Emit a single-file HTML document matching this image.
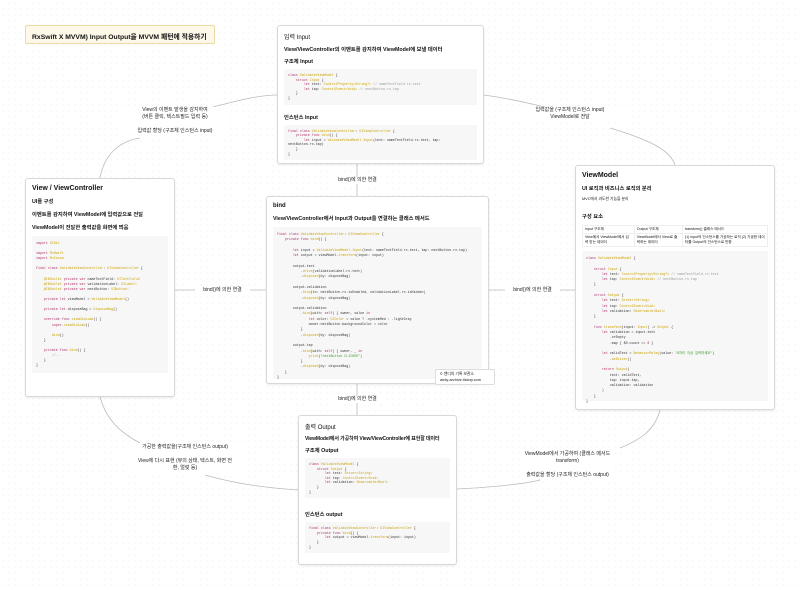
<!DOCTYPE html>
<html><head><meta charset="utf-8">
<style>
*{margin:0;padding:0;box-sizing:border-box}
body{width:800px;height:590px;background:#fff;position:relative;overflow:hidden;font-family:"Liberation Sans","Noto Sans CJK KR",sans-serif;color:#111;background-image:radial-gradient(#e9e9e9 0.5px,transparent 0.6px);background-size:6px 6px}
.card{position:absolute;background:#fff;border:1px solid #d8d8d8;border-radius:3px;box-shadow:0 1px 2px rgba(0,0,0,.08);padding:6px}
.h{font-weight:bold;font-size:7px;margin-bottom:5px}
.h2{font-size:5.3px;font-weight:bold;margin-bottom:5px;white-space:nowrap}
pre{font-family:"Liberation Mono",monospace;font-size:3.3px;line-height:5.2px;background:#f7f7f7;padding:5px 4px;color:#333;white-space:pre}
.k{color:#b0306a}.t{color:#c9a100}.g{color:#999}.s{color:#3c9a2c}
.lbl{position:absolute;font-size:5px;text-align:center;background:#fff;line-height:7px;color:#222}
svg{position:absolute;left:0;top:0}
.sm .h2{margin-bottom:4px}
.sm pre{line-height:4.6px;padding:4px}
</style></head><body>
<svg width="800" height="590" fill="none" stroke="#bbb" stroke-width="0.8">
<path d="M100 178 C105 150 125 140 140 138"/>
<path d="M213 107 C240 100 260 95 277 95"/>
<path d="M484 95 C520 100 560 110 580 118"/>
<path d="M610 128 C650 140 670 150 675 165"/>
<path d="M357 164 V196"/><path d="M357 384 V415"/>
<path d="M175 290 H266"/><path d="M489 290 H575"/>
<path d="M660 410 C655 430 640 440 620 448"/>
<path d="M540 480 C520 485 480 488 457 489"/>
<path d="M100 397 C105 415 115 430 140 443"/>
<path d="M205 475 C240 485 270 488 298 490"/>
</svg>
<div style="position:absolute;left:25px;top:25px;width:190px;height:19px;background:#fdf8e8;border:1px solid #ecd9a3;border-radius:2px;font-size:6.8px;font-weight:bold;padding:5px 6px;white-space:nowrap">RxSwift X MVVM) Input Output을 MVVM 패턴에 적용하기</div>

<div class="lbl" style="left:120px;top:107px;width:110px">View의 이벤트 발생을 감지하여<br>(버튼 클릭, 텍스트필드 입력 등)<br><br>입력값 할당 (구조체 인스턴스 input)</div>
<div class="lbl" style="left:510px;top:107px;width:120px">입력값을 (구조체 인스턴스 input)<br>ViewModel로 전달</div>
<div class="lbl" style="left:330px;top:177px;width:55px">bind()에 의한 연결</div>
<div class="lbl" style="left:330px;top:396px;width:55px">bind()에 의한 연결</div>
<div class="lbl" style="left:195px;top:287px;width:55px">bind()에 의한 연결</div>
<div class="lbl" style="left:505px;top:287px;width:55px">bind()에 의한 연결</div>
<div class="lbl" style="left:125px;top:444px;width:120px">가공한 출력값을(구조체 인스턴스 output)<br><br>View에 다시 표현 (뷰의 상태, 텍스트, 화면 전<br>환, 얼럿 등)</div>
<div class="lbl" style="left:520px;top:451px;width:95px">ViewModel에서 가공하여 (클래스 메서드<br>transform)<br><br>출력값을 할당 (구조체 인스턴스 output)</div>

<div class="card sm" style="left:277px;top:25px;width:207px;height:139px">
<div class="h2" style="font-weight:normal;font-size:6px">입력 Input</div>
<div class="h2">View/ViewController의 이벤트를 감지하여 ViewModel에 보낼 데이터</div>
<div class="h2">구조체 Input</div>
<pre><span class="k">class</span> <span class="t">ValidateViewModel</span> {
    <span class="k">struct</span> <span class="t">Input</span> {
        <span class="k">let</span> text: <span class="t">ControlProperty&lt;String?&gt;</span> <span class="g">// nameTextField.rx.text</span>
        <span class="k">let</span> tap: <span class="t">ControlEvent&lt;Void&gt;</span> <span class="g">// nextButton.rx.tap</span>
    }
}</pre>
<div class="h2" style="margin-top:8px">인스턴스 Input</div>
<pre><span class="k">final class</span> <span class="t">ValidateViewController</span>: <span class="t">UIViewController</span> {
    <span class="k">private func</span> <span class="t">bind</span>() {
        <span class="k">let</span> input = <span class="t">ValidateViewModel.Input</span>(text: nameTextField.rx.text, tap:
nextButton.rx.tap)
    }
}</pre>
</div>

<div class="card" style="left:25px;top:178px;width:150px;height:219px">
<div class="h">View / ViewController</div>
<div class="h2">UI를 구성</div>
<div class="h2">이벤트를 감지하여 ViewModel에 입력값으로 전달</div>
<div class="h2">ViewModel이 전달한 출력값을 화면에 띄움</div>
<pre style="line-height:5.1px"><span class="k">import</span> <span class="t">UIKit</span>

<span class="k">import</span> <span class="t">RxSwift</span>
<span class="k">import</span> <span class="t">RxCocoa</span>

<span class="k">final class</span> <span class="t">ValidateViewController</span>: <span class="t">UIViewController</span> {

    <span class="t">@IBOutlet</span> <span class="k">private var</span> nameTextField: <span class="t">UITextField!</span>
    <span class="t">@IBOutlet</span> <span class="k">private var</span> validationLabel: <span class="t">UILabel!</span>
    <span class="t">@IBOutlet</span> <span class="k">private var</span> nextButton: <span class="t">UIButton!</span>

    <span class="k">private let</span> viewModel = <span class="t">ValidateViewModel</span>()

    <span class="k">private let</span> disposeBag = <span class="t">DisposeBag</span>()

    <span class="k">override func</span> <span class="t">viewDidLoad</span>() {
        <span class="k">super</span>.<span class="t">viewDidLoad</span>()

        <span class="t">bind</span>()
    }

    <span class="k">private func</span> <span class="t">bind</span>() {
        <span class="g">//...</span>
    }
}</pre>
</div>

<div class="card" style="left:266px;top:196px;width:223px;height:188px">
<div class="h2" style="font-size:6px">bind</div>
<div class="h2">View/ViewController에서 Input과 Output을 연결하는 클래스 메서드</div>
<pre style="line-height:5.3px;height:152px"><span class="k">final class</span> <span class="t">ValidateViewController</span>: <span class="t">UIViewController</span> {
    <span class="k">private func</span> <span class="t">bind</span>() {

        <span class="k">let</span> input = <span class="t">ValidateViewModel.Input</span>(text: nameTextField.rx.text, tap: nextButton.rx.tap)
        <span class="k">let</span> output = viewModel.<span class="t">transform</span>(input: input)

        output.text
            .<span class="t">drive</span>(validationLabel.rx.text)
            .<span class="t">disposed</span>(by: disposeBag)

        output.validation
            .<span class="t">bind</span>(to: nextButton.rx.isEnabled, validationLabel.rx.isHidden)
            .<span class="t">disposed</span>(by: disposeBag)

        output.validation
            .<span class="t">bind</span>(with: <span class="k">self</span>) { owner, value <span class="k">in</span>
                <span class="k">let</span> color: <span class="t">UIColor</span> = value ? .systemRed : .lightGray
                owner.nextButton.backgroundColor = color
            }
            .<span class="t">disposed</span>(by: disposeBag)

        output.tap
            .<span class="t">bind</span>(with: <span class="k">self</span>) { owner, _ <span class="k">in</span>
                <span class="t">print</span>(<span class="s">"nextButton CLICKED"</span>)
            }
            .<span class="t">disposed</span>(by: disposeBag)
    }
}</pre>
<div style="position:absolute;left:168px;top:172px;width:60px;height:16px;background:#fff;border:1px solid #ddd;border-radius:2px;font-size:3.8px;padding:2px 4px;line-height:5.5px">© 앤디의 기록 보관소<br>andy-archive.tistory.com</div>
</div>

<div class="card" style="left:575px;top:165px;width:200px;height:245px">
<div class="h">ViewModel</div>
<div class="h2">UI 로직과 비즈니스 로직의 분리</div>
<div style="font-size:3.8px;margin-bottom:10px">MVC에서 과도한 기능을 분리</div>
<div class="h2">구성 요소</div>
<table style="border-collapse:collapse;font-size:3.6px;width:100%;margin-bottom:4px">
<tr><td style="border:1px solid #eee;padding:1px 2px;width:28%">Input 구조체</td><td style="border:1px solid #eee;padding:1px 2px;width:26%">Output 구조체</td><td style="border:1px solid #eee;padding:1px 2px">transform() 클래스 메서드</td></tr>
<tr><td style="border:1px solid #eee;padding:1px 2px">View에서 ViewModel에서 입력 받는 데이터</td><td style="border:1px solid #eee;padding:1px 2px">ViewModel에서 View로 출력하는 데이터</td><td style="border:1px solid #eee;padding:1px 2px">(1) input의 인스턴스를 가공하는 로직 (2) 가공한 데이터를 Output의 인스턴스로 반환</td></tr>
</table>
<pre style="line-height:5.3px;height:150px"><span class="k">class</span> <span class="t">ValidateViewModel</span> {

    <span class="k">struct</span> <span class="t">Input</span> {
        <span class="k">let</span> text: <span class="t">ControlProperty&lt;String?&gt;</span> <span class="g">// nameTextField.rx.text</span>
        <span class="k">let</span> tap: <span class="t">ControlEvent&lt;Void&gt;</span> <span class="g">// nextButton.rx.tap</span>
    }

    <span class="k">struct</span> <span class="t">Output</span> {
        <span class="k">let</span> text: <span class="t">Driver&lt;String&gt;</span>
        <span class="k">let</span> tap: <span class="t">ControlEvent&lt;Void&gt;</span>
        <span class="k">let</span> validation: <span class="t">Observable&lt;Bool&gt;</span>
    }

    <span class="k">func</span> <span class="t">transform</span>(input: <span class="t">Input</span>) -&gt; <span class="t">Output</span> {
        <span class="k">let</span> validation = input.text
            .orEmpty
            .map { $0.count &gt;= <span class="k">8</span> }

        <span class="k">let</span> validText = <span class="t">BehaviorRelay</span>(value: <span class="s">"8자리 이상 입력하세요"</span>)
            .<span class="t">asDriver</span>()

        <span class="k">return</span> <span class="t">Output</span>(
            text: validText,
            tap: input.tap,
            validation: validation
        )
    }
}</pre>
</div>

<div class="card sm" style="left:298px;top:415px;width:159px;height:150px">
<div class="h2" style="font-weight:normal;font-size:6px">출력 Output</div>
<div class="h2" style="font-size:5px;letter-spacing:-0.1px">ViewModel에서 가공하여 View/ViewController에 표현할 데이터</div>
<div class="h2">구조체 Output</div>
<pre><span class="k">class</span> <span class="t">ValidateViewModel</span> {
    <span class="k">struct</span> <span class="t">Output</span> {
        <span class="k">let</span> text: <span class="t">Driver&lt;String&gt;</span>
        <span class="k">let</span> tap: <span class="t">ControlEvent&lt;Void&gt;</span>
        <span class="k">let</span> validation: <span class="t">Observable&lt;Bool&gt;</span>
    }
}</pre>
<div class="h2" style="margin-top:12px">인스턴스 output</div>
<pre><span class="k">final class</span> <span class="t">ValidateViewController</span>: <span class="t">UIViewController</span> {
    <span class="k">private func</span> <span class="t">bind</span>() {
        <span class="k">let</span> output = viewModel.<span class="t">transform</span>(input: input)
    }
}</pre>
</div>
</body></html>
